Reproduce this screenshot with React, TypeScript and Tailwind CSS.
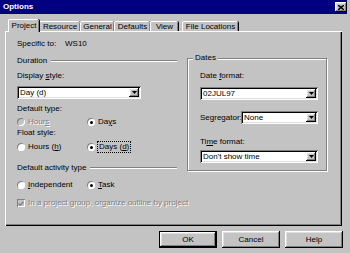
import React from "react";

const raised =
  "shadow-[inset_-1px_-1px_0_#000,inset_1px_1px_0_#fff,inset_-2px_-2px_0_#808080,inset_2px_2px_0_#dfdfdf]";
const sunken =
  "shadow-[inset_1px_1px_0_#808080,inset_-1px_-1px_0_#fff,inset_2px_2px_0_#000,inset_-2px_-2px_0_#dfdfdf]";
const disabledText = "text-[#808080] [text-shadow:1px_1px_0_#fff]";

const Select = ({ value, width }: { value: string; width: string }) => (
  <div className={`flex h-[13px] ${width} bg-white p-[2px] ${sunken}`}>
    <span className="flex-1 pl-[1px] leading-[9px]">{value}</span>
    <span className={`flex h-[9px] w-[10px] items-center justify-center bg-[#c3c3c3] ${raised}`}>
      <svg width="5" height="3" viewBox="0 0 5 3">
        <path d="M0 0h5L2.5 3z" fill="#000" />
      </svg>
    </span>
  </div>
);

const Radio = ({
  checked,
  disabled,
  focus,
  children,
}: {
  checked?: boolean;
  disabled?: boolean;
  focus?: boolean;
  children: React.ReactNode;
}) => (
  <div className="flex h-[10px] items-center gap-[3px]">
    <span
      className={`flex h-[8px] w-[8px] items-center justify-center rounded-full ${
        disabled ? "bg-[#c3c3c3]" : "bg-white"
      } shadow-[inset_1px_1px_0_#808080,inset_-1px_-1px_0_#fff]`}
    >
      {checked && <span className="h-[3px] w-[3px] rounded-full bg-black" />}
    </span>
    <span
      className={`leading-[10px] ${disabled ? disabledText : ""} ${
        focus ? "outline outline-1 outline-dotted outline-black px-[1px]" : ""
      }`}
    >
      {children}
    </span>
  </div>
);

const Label = ({ children }: { children: React.ReactNode }) => (
  <div className="h-[10px] leading-[10px]">{children}</div>
);

const Separator = ({ children, top }: { children: React.ReactNode; top: string }) => (
  <div className={`flex h-[10px] items-center ${top}`}>
    <span className="leading-[10px]">{children}</span>
    <span className="ml-[4px] h-[2px] flex-1 border-t border-b border-t-[#808080] border-b-white" />
  </div>
);

const Tab = ({ label, width, active, extra }: { label: string; width: string; active?: boolean; extra?: string }) => (
  <div
    className={`relative flex items-center justify-center ${width} ${extra ?? ""} border-l border-t border-white rounded-tl-[2px] rounded-tr-[2px] shadow-[inset_-1px_0_0_#808080,1px_0_0_#000] ${
      active ? "z-10 -mb-[1px] h-[13px] bg-[#c3c3c3]" : "h-[10px]"
    }`}
  >
    <span className="leading-[10px]">{label}</span>
  </div>
);

const Button = ({ label, primary }: { label: string; primary?: boolean }) => (
  <div
    className={`flex h-[17px] w-[58px] items-center justify-center ${
      primary ? "border border-black" : ""
    } ${raised}`}
  >
    <span className="leading-[10px]">{label}</span>
  </div>
);

export default function App() {
  return (
    <div className="flex h-[253px] w-[350px] flex-col overflow-hidden bg-[#c3c3c3] pr-[3px] font-['Liberation_Sans',Arial,sans-serif] text-[8px] text-black">
      <div className="flex h-[14px] items-center justify-between bg-[#000080] pl-[3px] pr-[0px]">
        <span className="text-[8px] font-bold leading-[10px] text-white">Options</span>
        <span className={`flex h-[10px] w-[12px] items-center justify-center bg-[#c3c3c3] ${raised}`}>
          <svg width="6" height="5" viewBox="0 0 6 5">
            <path d="M0 0L6 5M6 0L0 5" stroke="#000" strokeWidth="1.5" />
          </svg>
        </span>
      </div>

      <div className="mt-[5px] flex items-end pl-[8px]">
        <Tab label="Project" width="w-[31px]" active />
        <Tab label="Resource" width="w-[41px]" />
        <Tab label="General" width="w-[34px]" />
        <Tab label="Defaults" width="w-[36px]" />
        <Tab label="View" width="w-[28px]" />
        <Tab label="File Locations" width="w-[56px]" extra="ml-[4px]" />
      </div>

      <div className="ml-[5px] h-[195px] w-[337px] pl-[12px] pt-[8px] shadow-[inset_1px_1px_0_#fff,inset_-1px_-1px_0_#000,inset_-2px_-2px_0_#808080]">
        <div className="flex">
          <div className="flex w-[160px] flex-col">
            <div className="flex h-[10px] leading-[10px]">
              <span className="w-[48px]">Specific to:</span>
              <span>WS10</span>
            </div>
            <Separator top="mt-[7px]">Duration</Separator>
            <div className="mt-[5px]">
              <Label>
                Display <u>s</u>tyle:
              </Label>
            </div>
            <div className="mt-[5px]">
              <Select value="Day (d)" width="w-[124px]" />
            </div>
            <div className="mt-[5px]">
              <Label>Default type:</Label>
            </div>
            <div className="mt-[3px] flex">
              <div className="w-[70px]">
                <Radio disabled>
                  Hour<u>s</u>
                </Radio>
              </div>
              <Radio checked>
                Da<u>y</u>s
              </Radio>
            </div>
            <div className="mt-[1px]">
              <Label>Float style:</Label>
            </div>
            <div className="mt-[4px] flex">
              <div className="w-[70px]">
                <Radio>
                  Hours (<u>h</u>)
                </Radio>
              </div>
              <Radio checked focus>
                Days (<u>d</u>)
              </Radio>
            </div>
            <Separator top="mt-[11px]">Default activity type</Separator>
            <div className="mt-[7px] flex">
              <div className="w-[70px]">
                <Radio>
                  <u>I</u>ndependent
                </Radio>
              </div>
              <Radio checked>
                <u>T</u>ask
              </Radio>
            </div>
          </div>

          <div className="ml-[10px] mt-[19px] w-[140px] self-start">
            <div className="relative h-[113px] border border-[#808080] pl-[12px] pt-[12px] shadow-[inset_1px_1px_0_#fff,1px_1px_0_#fff]">
              <span className="absolute -top-[6px] left-[5px] bg-[#c3c3c3] px-[2px] leading-[10px]">Dates</span>
              <Label>
                Date <u>f</u>ormat:
              </Label>
              <div className="mt-[6px]">
                <Select value="02JUL97" width="w-[118px]" />
              </div>
              <div className="mt-[11px] flex items-center">
                <span className="w-[41px] leading-[10px]">
                  Se<u>g</u>regator:
                </span>
                <Select value="None" width="w-[77px]" />
              </div>
              <div className="mt-[13px]">
                <Label>
                  Ti<u>m</u>e format:
                </Label>
              </div>
              <div className="mt-[3px]">
                <Select value="Don't show time" width="w-[118px]" />
              </div>
            </div>
          </div>
        </div>

        <div className="mt-[8px] flex h-[10px] items-center gap-[3px]">
          <span className="flex h-[8px] w-[8px] items-center justify-center bg-[#c3c3c3] shadow-[inset_1px_1px_0_#808080,inset_-1px_-1px_0_#fff]">
            <svg width="6" height="5" viewBox="0 0 6 5">
              <path d="M0.5 2.5L2.2 4.2L5.5 0.8" stroke="#808080" strokeWidth="1.3" fill="none" />
            </svg>
          </span>
          <span className={`leading-[10px] ${disabledText}`}>
            In a project group, or<u>g</u>anize outline by project
          </span>
        </div>
      </div>

      <div className="mt-[5px] flex justify-end gap-[5px] pr-[4px]">
        <Button label="OK" primary />
        <Button label="Cancel" />
        <Button label="Help" />
      </div>
    </div>
  );
}
